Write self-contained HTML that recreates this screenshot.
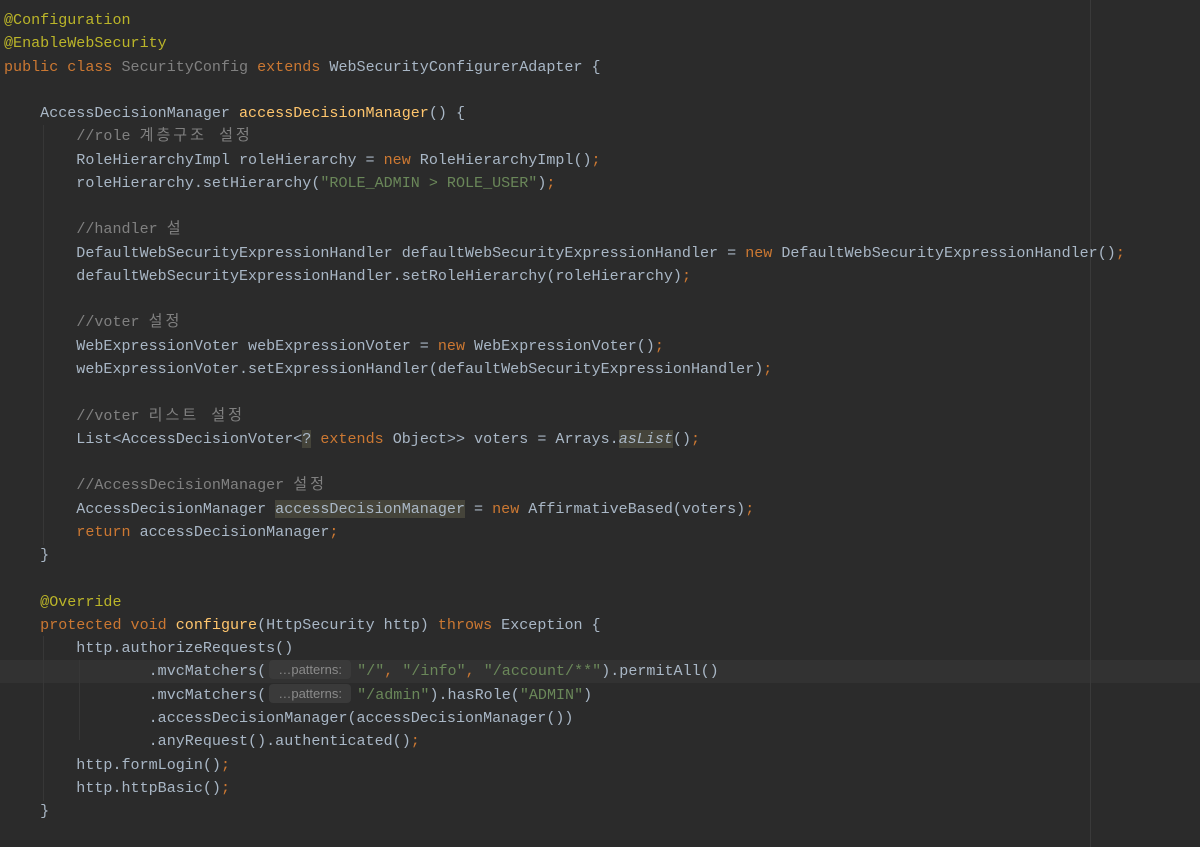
<!DOCTYPE html>
<html><head><meta charset="utf-8"><style>
html,body{margin:0;padding:0;background:#2b2b2b;width:1200px;height:847px;overflow:hidden}
.code{position:absolute;left:4px;top:9px;font-family:"Liberation Mono",monospace;font-size:15.07px;line-height:23.26px;color:#a9b7c6;white-space:pre}
.k{color:#cc7832}.a{color:#bbb529}.s{color:#6a8759}.m{color:#ffc66d}.c{color:#808080}.g{color:#808080}
.h{background:#45443a}
.ko{font-family:"Liberation Mono","Noto Sans CJK KR",sans-serif;letter-spacing:3px}
.hint{display:inline-block;width:82px;height:19px;line-height:19px;margin:0 6px 0 3px;background:#3a3a3a;border-radius:4px;color:#8a8a8a;font-family:"Liberation Sans",sans-serif;font-size:13px;text-align:center;vertical-align:1px}
.cur{position:absolute;left:0;top:660px;width:1200px;height:23px;background:#323232}
.margin{position:absolute;left:1090px;top:0;width:1px;height:847px;background:#3a3a3a}
.guide{position:absolute;width:1px;background:#373737}
</style></head><body>
<div class="cur"></div>
<div class="margin"></div>
<div class="guide" style="left:43px;top:125px;height:420px"></div>
<div class="guide" style="left:43px;top:636px;height:165px"></div>
<div class="guide" style="left:79px;top:660px;height:80px"></div>
<div class="code"><span class="a">@Configuration</span>
<span class="a">@EnableWebSecurity</span>
<span class="k">public class </span><span class="g">SecurityConfig</span> <span class="k">extends </span>WebSecurityConfigurerAdapter {

    AccessDecisionManager <span class="m">accessDecisionManager</span>() {
        <span class="c">//role <span class="ko">계층구조 설정</span></span>
        RoleHierarchyImpl roleHierarchy = <span class="k">new </span>RoleHierarchyImpl()<span class="k">;</span>
        roleHierarchy.setHierarchy(<span class="s">"ROLE_ADMIN &gt; ROLE_USER"</span>)<span class="k">;</span>

        <span class="c">//handler <span class="ko">설</span></span>
        DefaultWebSecurityExpressionHandler defaultWebSecurityExpressionHandler = <span class="k">new </span>DefaultWebSecurityExpressionHandler()<span class="k">;</span>
        defaultWebSecurityExpressionHandler.setRoleHierarchy(roleHierarchy)<span class="k">;</span>

        <span class="c">//voter <span class="ko">설정</span></span>
        WebExpressionVoter webExpressionVoter = <span class="k">new </span>WebExpressionVoter()<span class="k">;</span>
        webExpressionVoter.setExpressionHandler(defaultWebSecurityExpressionHandler)<span class="k">;</span>

        <span class="c">//voter <span class="ko">리스트 설정</span></span>
        List&lt;AccessDecisionVoter&lt;<span class="h">?</span> <span class="k">extends </span>Object&gt;&gt; voters = Arrays.<span class="h"><i>asList</i></span>()<span class="k">;</span>

        <span class="c">//AccessDecisionManager <span class="ko">설정</span></span>
        AccessDecisionManager <span class="h">accessDecisionManager</span> = <span class="k">new </span>AffirmativeBased(voters)<span class="k">;</span>
        <span class="k">return </span>accessDecisionManager<span class="k">;</span>
    }

    <span class="a">@Override</span>
    <span class="k">protected void </span><span class="m">configure</span>(HttpSecurity http) <span class="k">throws </span>Exception {
        http.authorizeRequests()
                .mvcMatchers(<span class="hint">…patterns:</span><span class="s">"/"</span><span class="k">, </span><span class="s">"/info"</span><span class="k">, </span><span class="s">"/account/**"</span>).permitAll()
                .mvcMatchers(<span class="hint">…patterns:</span><span class="s">"/admin"</span>).hasRole(<span class="s">"ADMIN"</span>)
                .accessDecisionManager(accessDecisionManager())
                .anyRequest().authenticated()<span class="k">;</span>
        http.formLogin()<span class="k">;</span>
        http.httpBasic()<span class="k">;</span>
    }</div>
</body></html>
